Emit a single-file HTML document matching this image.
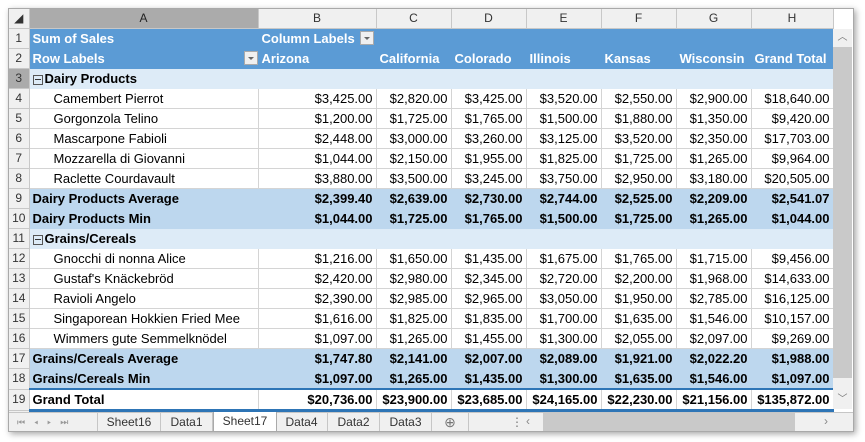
<!DOCTYPE html>
<html><head><meta charset="utf-8"><style>
body{margin:0;background:#fff;width:865px;height:442px;overflow:hidden;font-family:"Liberation Sans",sans-serif;}
#win{position:absolute;left:8px;top:8px;width:844px;height:422px;border:1px solid #a9a9a9;box-shadow:2px 2px 6px rgba(0,0,0,.35);background:#fff;overflow:hidden}
table{position:absolute;left:0;top:0;border-collapse:collapse;table-layout:fixed;font-size:13px}
td{height:19px;padding:0 3px;border-right:1px solid #d4d4d4;border-bottom:1px solid #d4d4d4;white-space:nowrap;overflow:hidden;color:#000;position:relative;line-height:19px}
td.n{text-align:right}
td.rh{background:#f0f0f0;color:#333;text-align:center;padding:0;font-size:12px;border-color:#c8c8c8}
tr.ch td{background:#f0f0f0;color:#333;text-align:center;font-size:12px;border-color:#c8c8c8}
tr.ch td.sel{background:#ababab;color:#222}
td.rh.sel{background:#ababab}
tr.hd td:not(.rh){background:#5b9bd5;color:#fff;font-weight:bold;border-color:#5b9bd5}
tr.cat td:not(.rh){background:#ddebf7;font-weight:bold;border-color:#ddebf7}
tr.sub td:not(.rh){background:#bdd7ee;font-weight:bold;border-color:#bdd7ee}
tr.gt td:not(.rh){font-weight:bold;border-top:2px solid #2e75b6;border-bottom:3px solid #2e75b6}
.ind{padding-left:24px}
.dd{position:absolute;top:2px;width:14px;height:14px;background:#f0f0f0;border:1px solid #aaa;box-sizing:border-box}
.dd:after{content:"";position:absolute;left:3px;top:5px;border:3px solid transparent;border-top:3px solid #666}
.box{display:inline-block;width:8px;height:8px;border:1px solid #555;vertical-align:middle;position:relative;margin-right:2px;font-weight:normal}
.box:after{content:"";position:absolute;left:1px;top:3.5px;width:6px;height:1px;background:#333}
#vs{position:absolute;left:824px;top:20px;width:19px;height:380px;background:#f0f0f0}
#tabs{position:absolute;left:0;top:403px;width:844px;height:19px;background:#f0f0f0;border-top:1px solid #c6c6c6;font-size:12px;color:#333}
.tab{position:absolute;top:0;height:18px;line-height:18px;text-align:center;border-right:1px solid #c6c6c6}
</style></head><body>
<div id="win">
<table>
<colgroup><col style="width:20px"><col style="width:229px"><col style="width:118px"><col style="width:75px"><col style="width:75px"><col style="width:75px"><col style="width:75px"><col style="width:75px"><col style="width:82px"></colgroup>
<tr class="ch"><td>◢</td><td class="sel">A</td><td>B</td><td>C</td><td>D</td><td>E</td><td>F</td><td>G</td><td>H</td></tr>
<tr class="hd"><td class="rh">1</td><td>Sum of Sales</td><td>Column Labels<span class="dd" style="left:101px"></span></td><td></td><td></td><td></td><td></td><td></td><td></td></tr>
<tr class="hd"><td class="rh">2</td><td>Row Labels<span class="dd" style="right:0"></span></td><td>Arizona</td><td>California</td><td>Colorado</td><td>Illinois</td><td>Kansas</td><td>Wisconsin</td><td>Grand Total</td></tr>
<tr class="cat"><td class="rh sel">3</td><td><span class="box"></span>Dairy Products</td><td></td><td></td><td></td><td></td><td></td><td></td><td></td></tr>
<tr><td class="rh">4</td><td class="ind">Camembert Pierrot</td><td class="n">$3,425.00</td><td class="n">$2,820.00</td><td class="n">$3,425.00</td><td class="n">$3,520.00</td><td class="n">$2,550.00</td><td class="n">$2,900.00</td><td class="n">$18,640.00</td></tr>
<tr><td class="rh">5</td><td class="ind">Gorgonzola Telino</td><td class="n">$1,200.00</td><td class="n">$1,725.00</td><td class="n">$1,765.00</td><td class="n">$1,500.00</td><td class="n">$1,880.00</td><td class="n">$1,350.00</td><td class="n">$9,420.00</td></tr>
<tr><td class="rh">6</td><td class="ind">Mascarpone Fabioli</td><td class="n">$2,448.00</td><td class="n">$3,000.00</td><td class="n">$3,260.00</td><td class="n">$3,125.00</td><td class="n">$3,520.00</td><td class="n">$2,350.00</td><td class="n">$17,703.00</td></tr>
<tr><td class="rh">7</td><td class="ind">Mozzarella di Giovanni</td><td class="n">$1,044.00</td><td class="n">$2,150.00</td><td class="n">$1,955.00</td><td class="n">$1,825.00</td><td class="n">$1,725.00</td><td class="n">$1,265.00</td><td class="n">$9,964.00</td></tr>
<tr><td class="rh">8</td><td class="ind">Raclette Courdavault</td><td class="n">$3,880.00</td><td class="n">$3,500.00</td><td class="n">$3,245.00</td><td class="n">$3,750.00</td><td class="n">$2,950.00</td><td class="n">$3,180.00</td><td class="n">$20,505.00</td></tr>
<tr class="sub"><td class="rh">9</td><td>Dairy Products Average</td><td class="n">$2,399.40</td><td class="n">$2,639.00</td><td class="n">$2,730.00</td><td class="n">$2,744.00</td><td class="n">$2,525.00</td><td class="n">$2,209.00</td><td class="n">$2,541.07</td></tr>
<tr class="sub"><td class="rh">10</td><td>Dairy Products Min</td><td class="n">$1,044.00</td><td class="n">$1,725.00</td><td class="n">$1,765.00</td><td class="n">$1,500.00</td><td class="n">$1,725.00</td><td class="n">$1,265.00</td><td class="n">$1,044.00</td></tr>
<tr class="cat"><td class="rh">11</td><td><span class="box"></span>Grains/Cereals</td><td></td><td></td><td></td><td></td><td></td><td></td><td></td></tr>
<tr><td class="rh">12</td><td class="ind">Gnocchi di nonna Alice</td><td class="n">$1,216.00</td><td class="n">$1,650.00</td><td class="n">$1,435.00</td><td class="n">$1,675.00</td><td class="n">$1,765.00</td><td class="n">$1,715.00</td><td class="n">$9,456.00</td></tr>
<tr><td class="rh">13</td><td class="ind">Gustaf's Knäckebröd</td><td class="n">$2,420.00</td><td class="n">$2,980.00</td><td class="n">$2,345.00</td><td class="n">$2,720.00</td><td class="n">$2,200.00</td><td class="n">$1,968.00</td><td class="n">$14,633.00</td></tr>
<tr><td class="rh">14</td><td class="ind">Ravioli Angelo</td><td class="n">$2,390.00</td><td class="n">$2,985.00</td><td class="n">$2,965.00</td><td class="n">$3,050.00</td><td class="n">$1,950.00</td><td class="n">$2,785.00</td><td class="n">$16,125.00</td></tr>
<tr><td class="rh">15</td><td class="ind">Singaporean Hokkien Fried Mee</td><td class="n">$1,616.00</td><td class="n">$1,825.00</td><td class="n">$1,835.00</td><td class="n">$1,700.00</td><td class="n">$1,635.00</td><td class="n">$1,546.00</td><td class="n">$10,157.00</td></tr>
<tr><td class="rh">16</td><td class="ind">Wimmers gute Semmelknödel</td><td class="n">$1,097.00</td><td class="n">$1,265.00</td><td class="n">$1,455.00</td><td class="n">$1,300.00</td><td class="n">$2,055.00</td><td class="n">$2,097.00</td><td class="n">$9,269.00</td></tr>
<tr class="sub"><td class="rh">17</td><td>Grains/Cereals Average</td><td class="n">$1,747.80</td><td class="n">$2,141.00</td><td class="n">$2,007.00</td><td class="n">$2,089.00</td><td class="n">$1,921.00</td><td class="n">$2,022.20</td><td class="n">$1,988.00</td></tr>
<tr class="sub"><td class="rh">18</td><td>Grains/Cereals Min</td><td class="n">$1,097.00</td><td class="n">$1,265.00</td><td class="n">$1,435.00</td><td class="n">$1,300.00</td><td class="n">$1,635.00</td><td class="n">$1,546.00</td><td class="n">$1,097.00</td></tr>
<tr class="gt"><td class="rh">19</td><td>Grand Total</td><td class="n">$20,736.00</td><td class="n">$23,900.00</td><td class="n">$23,685.00</td><td class="n">$24,165.00</td><td class="n">$22,230.00</td><td class="n">$21,156.00</td><td class="n">$135,872.00</td></tr>
<tr><td class="rh"></td><td></td><td></td><td></td><td></td><td></td><td></td><td></td><td></td></tr>
</table>
<div id="vs"><div style="position:absolute;top:0;left:0;width:19px;height:18px;text-align:center;font-size:10px;color:#777;line-height:18px">︿</div><div style="position:absolute;top:18px;left:0;width:19px;height:331px;background:#c9c9c9"></div><div style="position:absolute;top:362px;left:0;width:19px;height:18px;text-align:center;font-size:10px;color:#777;line-height:18px">﹀</div></div>
<div id="tabs">
<div class="tab" style="left:0;width:88px;color:#999;font-size:9px;text-align:left;padding-left:8px;width:80px;letter-spacing:9px">⏮◂▸⏭</div>
<div class="tab" style="left:89px;width:62px">Sheet16</div>
<div class="tab" style="left:152px;width:51px">Data1</div>
<div class="tab" style="left:204px;width:62px;background:#fff;height:19px;border-left:1px solid #aaa;border-right:1px solid #aaa;top:-1px">Sheet17</div>
<div class="tab" style="left:267px;width:51px">Data4</div>
<div class="tab" style="left:319px;width:51px">Data2</div>
<div class="tab" style="left:371px;width:51px">Data3</div>
<div class="tab" style="left:423px;width:36px;font-size:14px;color:#777">⊕</div>
<div style="position:absolute;left:502px;top:2px;color:#777;font-size:12px">⋮</div>
<div style="position:absolute;left:512px;top:0;width:312px;height:19px;background:#f0f0f0"><div style="position:absolute;left:22px;top:0;width:252px;height:19px;background:#c9c9c9"></div><span style="position:absolute;left:5px;top:1px;color:#888">‹</span><span style="position:absolute;right:5px;top:1px;color:#888">›</span></div>
</div>
</div>
</body></html>
